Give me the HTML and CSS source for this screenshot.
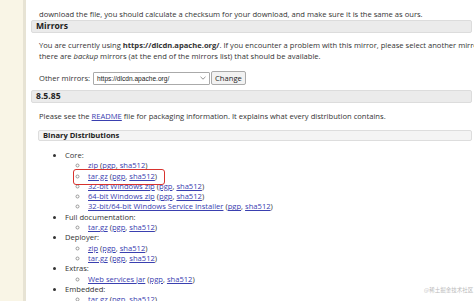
FILE: index.html
```html
<!DOCTYPE html>
<html lang="en">

<head>
    <meta charset="utf-8">
    <title>Apache Tomcat 8 Downloads</title>
    <link rel="stylesheet" href="styles.css">
</head>

<body>
    <div class="page">
        <aside class="sidebar"></aside>
        <main class="content">
            <p class="intro">download the file, you should calculate a checksum for your download, and make sure it is the same as ours.</p>

            <section class="section">
                <h3 class="section_titel">Mirrors</h3>
                <div class="section_body">
                    <p class="tekst">You are currently using <b>https://dlcdn.apache.org/</b>. If you encounter a problem with this mirror, please select another mirror. If<br>there are <i>backup</i> mirrors (at the end of the mirrors list) that should be available.</p>
                    <form class="mirror_form">
                        <label>Other mirrors:</label>
                        <span class="vaelg">
                            <span>https://dlcdn.apache.org/</span>
                            <svg width="6" height="4" viewBox="0 0 6 4"><path d="M0.5 0.8 L3 3.2 L5.5 0.8" fill="none" stroke="#777" stroke-width="0.8"/></svg>
                        </span>
                        <button type="button" class="knap">Change</button>
                    </form>
                </div>
            </section>

            <section class="section">
                <h3 class="section_titel">8.5.85</h3>
                <div class="section_body">
                    <p class="tekst readme">Please see the <a href="#">README</a> file for packaging information. It explains what every distribution contains.</p>

                    <h4 class="under_titel">Binary Distributions</h4>
                    <ul class="dist">
                        <li>Core:
                            <ul>
                                <li><a href="#">zip</a> (<a href="#">pgp</a>, <a href="#">sha512</a>)</li>
                                <li class="markeret"><a href="#">tar.gz</a> (<a href="#">pgp</a>, <a href="#">sha512</a>)</li>
                                <li><a href="#">32-bit Windows zip</a> (<a href="#">pgp</a>, <a href="#">sha512</a>)</li>
                                <li><a href="#">64-bit Windows zip</a> (<a href="#">pgp</a>, <a href="#">sha512</a>)</li>
                                <li><a href="#">32-bit/64-bit Windows Service Installer</a> (<a href="#">pgp</a>, <a href="#">sha512</a>)</li>
                            </ul>
                        </li>
                        <li>Full documentation:
                            <ul>
                                <li><a href="#">tar.gz</a> (<a href="#">pgp</a>, <a href="#">sha512</a>)</li>
                            </ul>
                        </li>
                        <li>Deployer:
                            <ul>
                                <li><a href="#">zip</a> (<a href="#">pgp</a>, <a href="#">sha512</a>)</li>
                                <li><a href="#">tar.gz</a> (<a href="#">pgp</a>, <a href="#">sha512</a>)</li>
                            </ul>
                        </li>
                        <li>Extras:
                            <ul>
                                <li><a href="#">Web services jar</a> (<a href="#">pgp</a>, <a href="#">sha512</a>)</li>
                            </ul>
                        </li>
                        <li>Embedded:
                            <ul>
                                <li><a href="#">tar.gz</a> (<a href="#">pgp</a>, <a href="#">sha512</a>)</li>
                            </ul>
                        </li>
                    </ul>
                </div>
            </section>
        </main>
    </div>
    <div class="vandmaerke">@稀土掘金技术社区</div>
</body></html>
```

FILE: styles.css
```css
* {
    box-sizing: border-box;
}

html,
body {
    margin: 0;
    height: 301px;
    overflow: hidden;
}

body {
    font-family: 'Open Sans', sans-serif;
    font-size: 7.6px;
    color: #333;
    background-color: white;
}

a {
    color: #3a40b0;
}

.page {
    display: flex;
    height: 100%;
}

/*Venstre side*/
.sidebar {
    width: 26px;
    flex-shrink: 0;
    background-color: #f9f5e6;
    border-right: 3px solid #e7e3d4;
}

.content {
    flex: 1;
    padding: 0 2px 0 5px;
    min-width: 0;
}

.intro {
    margin: 9px 0 0 8px;
    line-height: 11px;
    white-space: nowrap;
}

/*Sektioner*/
.section_titel {
    margin: 0;
    padding: 0 4px;
    font-size: 8.6px;
    font-weight: 700;
    line-height: 11px;
    color: #222;
    background-color: #ebebeb;
    border: 1px solid #dcdcdc;
    border-radius: 2px;
}

.section:first-of-type .section_titel {
    margin-top: 0;
}

.section+.section .section_titel {
    margin-top: 5px;
}

.section_body {
    padding-left: 8px;
}

.tekst {
    margin: 7px 0 0;
    line-height: 11px;
    white-space: nowrap;
}

.readme {
    margin-top: 8px;
}

.mirror_form {
    display: flex;
    align-items: center;
    margin-top: 9px;
    height: 14px;
}

.mirror_form label {
    margin-right: 3px;
}

.vaelg {
    display: flex;
    align-items: center;
    justify-content: space-between;
    width: 117px;
    height: 13px;
    padding: 0 3px 0 3px;
    font-family: 'Liberation Sans', sans-serif;
    font-size: 6.6px;
    color: #222;
    border: 1px solid #aaa;
    border-radius: 1px;
    background-color: white;
}

.knap {
    height: 14px;
    margin-left: 1px;
    padding: 0 3px;
    font-family: 'Open Sans', sans-serif;
    font-size: 7.6px;
    color: #222;
    background-color: #f2f2f2;
    border: 1px solid #aaa;
    border-radius: 2px;
}

.under_titel {
    margin: 8px 0 0 -1px;
    padding: 0 4px;
    font-size: 7.6px;
    font-weight: 700;
    line-height: 9px;
    color: #222;
    background-color: #f4f4f4;
    border: 1px solid #dddddd;
    border-radius: 2px;
}

/*Liste*/
.dist {
    margin: 9px 0 0;
    padding-left: 26px;
    line-height: 10.3px;
}

.dist ul {
    margin: 0;
    padding-left: 23px;
    list-style-type: circle;
}

.dist ul li::marker {
    color: #999;
}

.markeret {
    position: relative;
}

.markeret::after {
    content: "";
    position: absolute;
    left: -15px;
    top: -2px;
    width: 90px;
    height: 14px;
    border: 1.5px solid #d8332e;
    border-radius: 3px;
}

.vandmaerke {
    position: absolute;
    left: 424px;
    top: 286px;
    font-family: 'Noto Sans CJK SC', sans-serif;
    font-size: 5.5px;
    color: #bbb;
}
```
